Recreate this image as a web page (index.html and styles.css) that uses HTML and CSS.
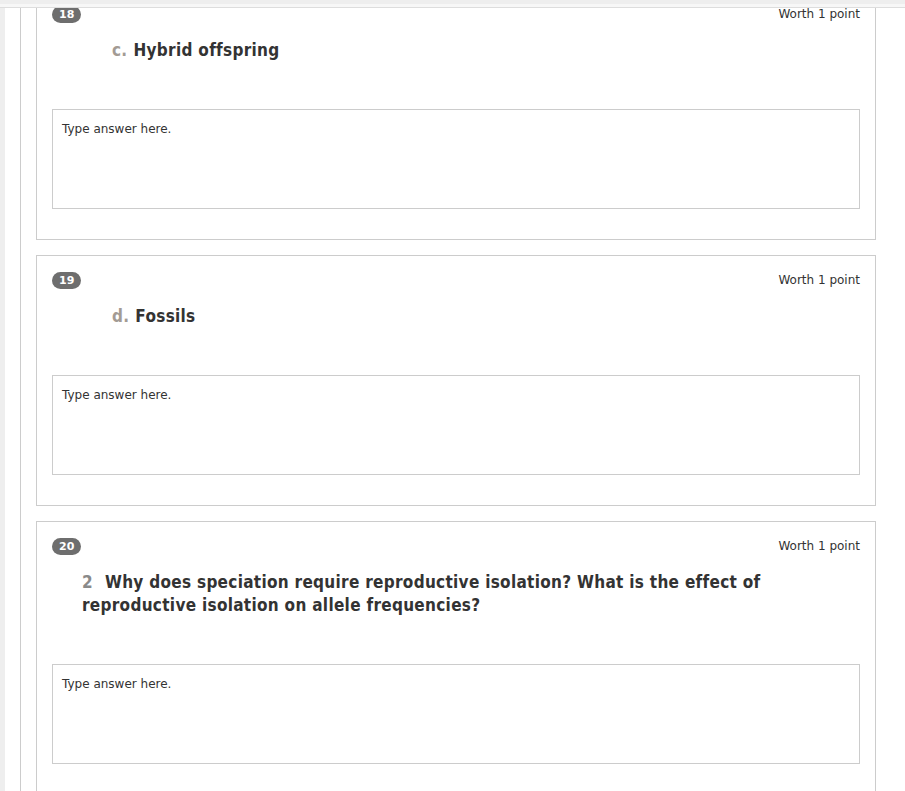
FILE: index.html
```html
<!DOCTYPE html>
<html>
<head>
<meta charset="utf-8">
<link rel="stylesheet" href="styles.css">
</head>
<body>
<div class="topbar"></div>
<div class="page">
  <div class="sidebar"></div>
  <div class="main">
    <div class="wrap">
      <div class="list">
        <section class="card">
          <div class="card-head"><span class="badge">18</span><span class="worth">Worth 1 point</span></div>
          <div class="question sub"><span class="label">c.</span><span class="qtext">Hybrid offspring</span></div>
          <div class="answer">Type answer here.</div>
        </section>
        <section class="card">
          <div class="card-head"><span class="badge">19</span><span class="worth">Worth 1 point</span></div>
          <div class="question sub"><span class="label">d.</span><span class="qtext">Fossils</span></div>
          <div class="answer">Type answer here.</div>
        </section>
        <section class="card">
          <div class="card-head"><span class="badge">20</span><span class="worth">Worth 1 point</span></div>
          <div class="question"><span class="label num">2</span><span class="qtext">Why does speciation require reproductive isolation? What is the effect of reproductive isolation on allele frequencies?</span></div>
          <div class="answer">Type answer here.</div>
        </section>
      </div>
    </div>
  </div>
</div>
</body>
</html>
```
FILE: styles.css
```css
html, body {
  margin: 0;
  padding: 0;
  background: #fff;
  font-family: "DejaVu Sans", Verdana, sans-serif;
  color: #333;
  overflow: hidden;
}
.topbar {
  position: fixed;
  top: 0;
  left: 0;
  right: 0;
  height: 4px;
  background: #eeeeee;
  border-bottom: 3px solid #f7f7f7;
  box-shadow: 0 1px 0 #dddddd;
  z-index: 5;
}
.page {
  display: flex;
  min-height: 791px;
}
.sidebar {
  width: 5px;
  flex: none;
  background: #eeeeee;
}
.main {
  flex: 1;
  padding-left: 15px;
}
.wrap {
  border-left: 1px solid #cccccc;
  padding-left: 15px;
  min-height: 791px;
}
.list {
  width: 840px;
  margin-top: -11px;
}
.card {
  border: 1px solid #cccccc;
  padding: 16px 15px 30px 15px;
  margin-bottom: 15px;
  background: #fff;
}
.card-head {
  display: flex;
  justify-content: space-between;
  align-items: center;
  height: 17px;
}
.badge {
  background: #6e6e6e;
  color: #fff;
  font-weight: bold;
  font-size: 11px;
  line-height: 17px;
  height: 17px;
  padding: 0 7px;
  border-radius: 9px;
}
.worth {
  font-size: 12px;
  line-height: 17px;
  color: #333;
}
.question {
  margin: 16px 0 0 30px;
  font-family: "DejaVu Sans Condensed", "DejaVu Sans", sans-serif;
  font-weight: bold;
  font-size: 17px;
  line-height: 23px;
  letter-spacing: 0.3px;
  color: #333;
  max-width: 700px;
}
.question.sub {
  margin-left: 60px;
}
.label {
  color: #a39b94;
  margin-right: 6px;
}
.label.num {
  color: #8a8a8a;
  margin-right: 12px;
}
.answer {
  margin-top: 47px;
  height: 100px;
  box-sizing: border-box;
  border: 1px solid #cccccc;
  padding: 11px 9px;
  font-size: 12px;
  line-height: 16px;
  color: #333;
}
```
